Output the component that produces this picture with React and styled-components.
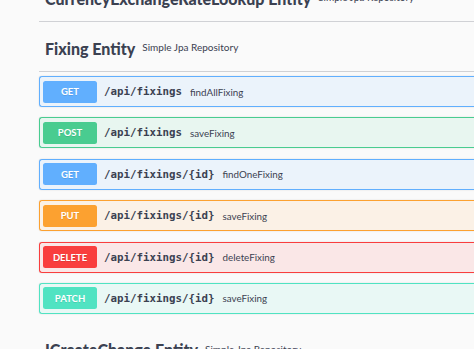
import React from "react";
import styled, { createGlobalStyle } from "styled-components";

const Global = createGlobalStyle`
  html, body { margin: 0; padding: 0; background: #fafafa; }
  body { overflow: hidden; width: 474px; height: 349px; }
  * { box-sizing: border-box; }
`;

const Page = styled.div`
  margin-top: -28px;
  padding-left: 39px;
  width: 560px;
  font-family: Lato, "Open Sans", sans-serif;
  color: #3b4151;
`;

const Section = styled.section`
  display: flex;
  flex-direction: column;
  margin-bottom: ${(p) => (p.$open ? "10px" : "0")};
`;

const TagHeading = styled.h3`
  margin: 0 0 ${(p) => (p.$open ? "4px" : "0")};
  height: 50px;
  padding: 3px 10px 0 6px;
  display: flex;
  align-items: center;
  border-bottom: 1px solid rgba(59, 65, 81, 0.22);
  font-size: 16px;
  font-weight: 900;
  color: #3b4151;
  white-space: nowrap;
`;

const TagNote = styled.small`
  margin-left: 7px;
  font-size: 10px;
  font-weight: 400;
  color: #3b4151;
  margin-top: -2px;
`;

const OpList = styled.div`
  display: flex;
  flex-direction: column;
  gap: 10.4px;
`;

const methodColors = {
  GET: { main: "#61affe", bg: "#ebf3fb" },
  POST: { main: "#49cc90", bg: "#e8f6f0" },
  PUT: { main: "#fca130", bg: "#fbf1e6" },
  DELETE: { main: "#f93e3e", bg: "#fae7e7" },
  PATCH: { main: "#50e3c2", bg: "#e9f8f5" },
};

const OpRow = styled.div`
  height: 31px;
  display: flex;
  align-items: center;
  padding: 0 3px;
  border: 1px solid ${(p) => methodColors[p.$m].main};
  border-right: none;
  border-radius: 3px 0 0 3px;
  background: ${(p) => methodColors[p.$m].bg};
  box-shadow: 0 0 2px rgba(0, 0, 0, 0.12);
`;

const Badge = styled.span`
  width: 54px;
  height: 22px;
  flex: none;
  display: flex;
  align-items: center;
  justify-content: center;
  border-radius: 2.5px;
  background: ${(p) => methodColors[p.$m].main};
  color: #fff;
  font-family: Lato, "Open Sans", sans-serif;
  font-weight: 700;
  font-size: 9.5px;
  text-shadow: 0 1px 0 rgba(0, 0, 0, 0.1);
`;

const Path = styled.span`
  margin-left: 7px;
  font-family: "DejaVu Sans Mono", "Liberation Mono", monospace;
  font-weight: 700;
  font-size: 10.8px;
  color: #3b4151;
`;

const Summary = styled.span`
  margin-left: 8px;
  font-size: 9.8px;
  color: #3b4151;
`;

const fixingOps = [
  { m: "GET", path: "/api/fixings", sum: "findAllFixing" },
  { m: "POST", path: "/api/fixings", sum: "saveFixing" },
  { m: "GET", path: "/api/fixings/{id}", sum: "findOneFixing" },
  { m: "PUT", path: "/api/fixings/{id}", sum: "saveFixing" },
  { m: "DELETE", path: "/api/fixings/{id}", sum: "deleteFixing" },
  { m: "PATCH", path: "/api/fixings/{id}", sum: "saveFixing" },
];

export default function App() {
  return (
    <>
      <Global />
      <Page>
        <Section>
          <TagHeading>
            CurrencyExchangeRateLookup Entity
            <TagNote>Simple Jpa Repository</TagNote>
          </TagHeading>
        </Section>
        <Section $open>
          <TagHeading $open>
            Fixing Entity
            <TagNote>Simple Jpa Repository</TagNote>
          </TagHeading>
          <OpList>
            {fixingOps.map((o, i) => (
              <OpRow key={i} $m={o.m}>
                <Badge $m={o.m}>{o.m}</Badge>
                <Path>{o.path}</Path>
                <Summary>{o.sum}</Summary>
              </OpRow>
            ))}
          </OpList>
        </Section>
        <Section>
          <TagHeading>
            ICreateChange Entity
            <TagNote>Simple Jpa Repository</TagNote>
          </TagHeading>
        </Section>
      </Page>
    </>
  );
}
